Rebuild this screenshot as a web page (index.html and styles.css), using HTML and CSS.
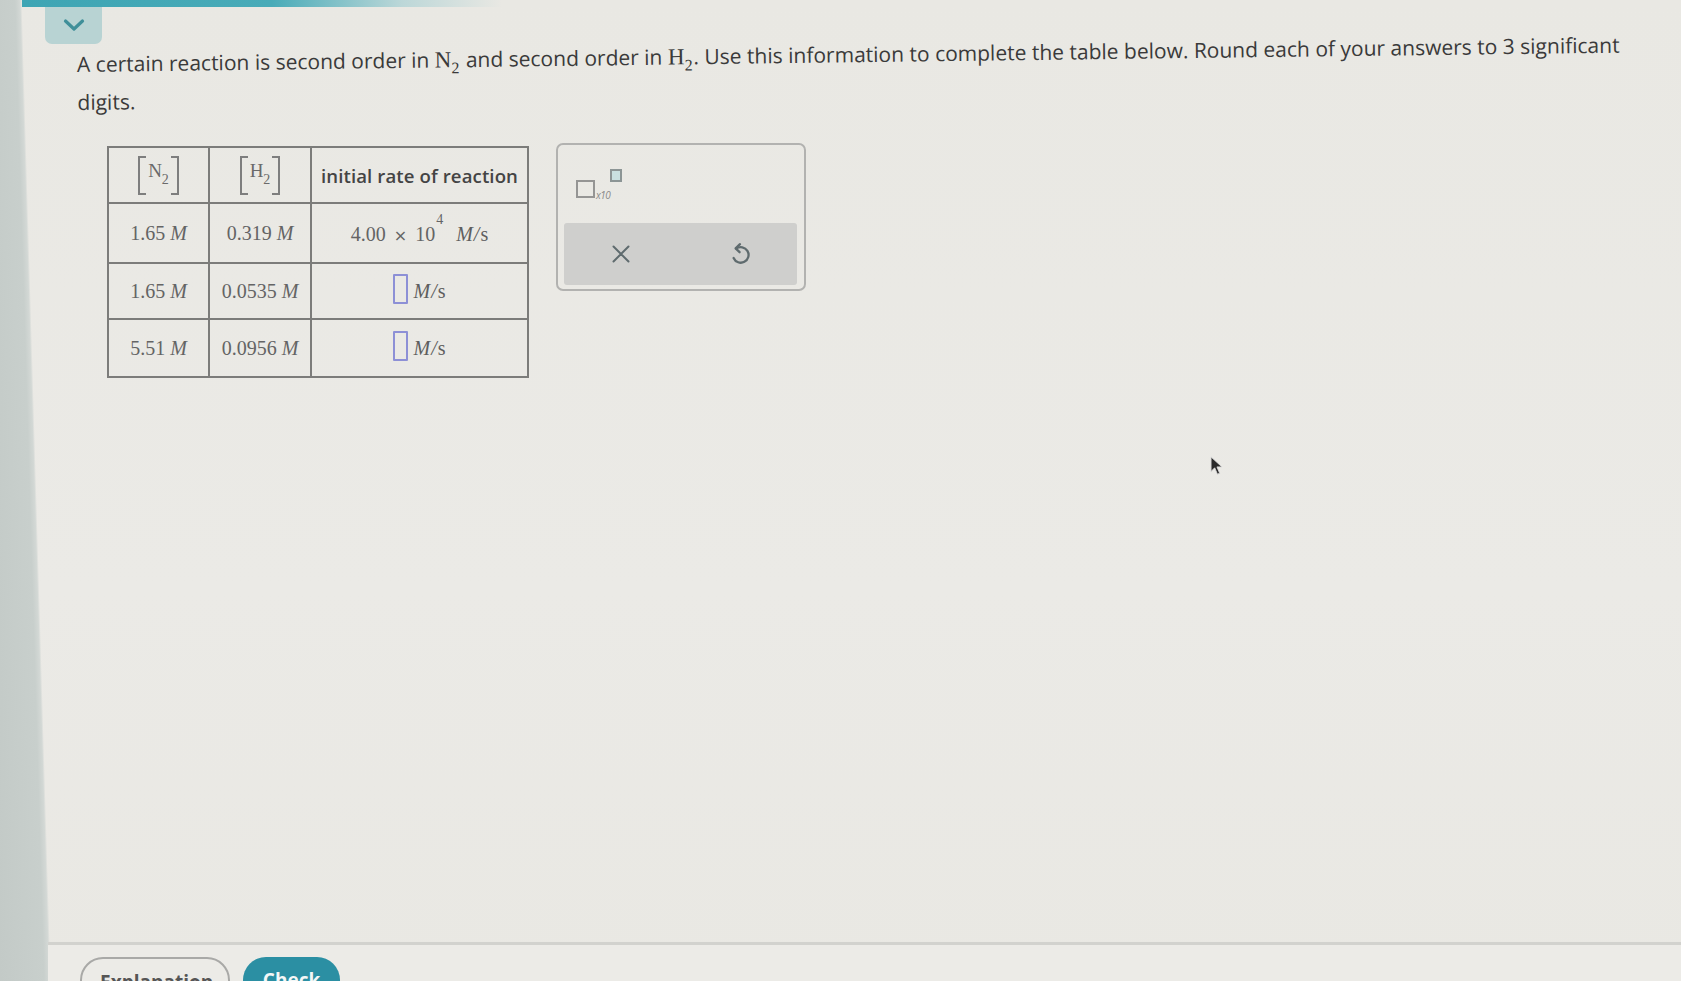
FILE: index.html
```html
<!DOCTYPE html>
<html lang="en">
<head>
<meta charset="utf-8">
<title>Rate law table</title>
<link rel="stylesheet" href="styles.css">
</head>
<body>
<div class="page">
  <div class="topband"></div>
  <div class="tab">
    <svg width="24" height="14" viewBox="0 0 24 14"><path d="M3.5 3 L12 11 L20.5 3" fill="none" stroke="#3f8f99" stroke-width="3.2" stroke-linecap="round" stroke-linejoin="round"/></svg>
  </div>
  <p class="q">A certain reaction is second order in <span class="chem">N<sub>2</sub></span> and second order in <span class="chem">H<sub>2</sub></span>. Use this information to complete the table below. Round each of your answers to 3 significant digits.</p>

  <div class="work">
    <table class="data">
      <tr class="hrow">
        <th class="c1"><span class="br l"></span><span class="chem-h">N<sub>2</sub></span><span class="br r"></span></th>
        <th class="c2"><span class="br l"></span><span class="chem-h">H<sub>2</sub></span><span class="br r"></span></th>
        <th class="c3 title">initial rate of reaction</th>
      </tr>
      <tr class="r1">
        <td>1.65 <i>M</i></td>
        <td>0.319 <i>M</i></td>
        <td>4.00 <span class="times">×</span> 10<sup>4</sup> <span class="unit"><i>M</i><i>/</i>s</span></td>
      </tr>
      <tr class="r2">
        <td>1.65 <i>M</i></td>
        <td>0.0535 <i>M</i></td>
        <td><span class="inbox"></span><span class="unit"><i>M</i><i>/</i>s</span></td>
      </tr>
      <tr class="r3">
        <td>5.51 <i>M</i></td>
        <td>0.0956 <i>M</i></td>
        <td><span class="inbox"></span><span class="unit"><i>M</i><i>/</i>s</span></td>
      </tr>
    </table>

    <div class="panel">
      <div class="sci">
        <span class="sbox"></span><span class="x10">x10</span><span class="sup"></span>
      </div>
      <div class="actions">
        <button class="act" aria-label="clear">
          <svg width="22" height="22" viewBox="0 0 22 22"><path d="M3.5 3.5 L18.5 18.5 M18.5 3.5 L3.5 18.5" stroke="#5f6b6e" stroke-width="2" stroke-linecap="round"/></svg>
        </button>
        <button class="act" aria-label="undo">
          <svg width="24" height="24" viewBox="0 0 24 24"><path d="M8.2 6.6 A7.8 7.8 0 1 1 5.6 16" fill="none" stroke="#5f6b6e" stroke-width="2.3" stroke-linecap="round"/><path d="M12 2.2 L7.6 6.4 L11.6 10.2" fill="none" stroke="#5f6b6e" stroke-width="2.3" stroke-linecap="round" stroke-linejoin="round"/></svg>
        </button>
      </div>
    </div>
  </div>

  <div class="spacer"></div>

  <div class="footer">
    <button class="btn explain">Explanation</button>
    <button class="btn check">Check</button>
  </div>

  <svg class="cursor" width="13" height="20" viewBox="0 0 14 22"><path d="M1 1 L1 17 L5 13 L8 20 L10.5 19 L7.5 12 L13 12 Z" fill="#2a2a2a" stroke="#d8d8d8" stroke-width="1"/></svg>
</div>
</body>
</html>
```

FILE: styles.css
```css
html, body {
  margin: 0;
  padding: 0;
}
body {
  width: 1681px;
  height: 981px;
  overflow: hidden;
  font-family: "Open Sans", "Liberation Sans", sans-serif;
}
.page {
  position: relative;
  width: 1681px;
  height: 981px;
  display: flex;
  flex-direction: column;
  background:
    linear-gradient(88.3deg, #c3cac7 0, #c8cfcc 44px, #d3d8d5 49px, rgba(0,0,0,0) 51px),
    linear-gradient(180deg, #e9e8e3 0%, #ebeae6 60%, #e9e8e3 100%);
  overflow: hidden;
}
.topband {
  margin-left: 22px;
  height: 7px;
  background: linear-gradient(90deg, #3ea5b4 0, #48abb8 250px, rgba(120,190,200,0.4) 380px, rgba(0,0,0,0) 480px);
  flex: none;
}
.tab {
  margin-left: 45px;
  width: 57px;
  height: 37px;
  background: #b8d3d3;
  border-radius: 0 0 7px 7px;
  display: flex;
  align-items: center;
  justify-content: center;
  flex: none;
}
.tab svg {
  margin-top: -2px;
}
.q {
  margin: 3px 0 0 0;
  padding-left: 77px;
  width: 1575px;
  font-size: 21px;
  line-height: 37.5px;
  color: #3a3a3a;
  transform-origin: 0 25%;
  transform: rotate(-0.72deg);
  flex: none;
}
.chem {
  font-family: "Liberation Serif", serif;
  font-size: 23px;
}
.chem sub {
  font-size: 16px;
  vertical-align: -6px;
  line-height: 0;
  margin-right: 1px;
}
.work {
  margin-top: 24px;
  margin-left: 107px;
  display: flex;
  align-items: flex-start;
  flex: none;
}
.data {
  border-collapse: collapse;
  font-family: "Liberation Serif", serif;
  font-size: 20px;
  color: #646464;
}
.data th, .data td {
  border: 2px solid #7c7c7a;
  text-align: center;
  padding: 0;
}
.data .c1 { width: 99px; }
.data .c2 { width: 100px; }
.data .c3 { width: 215px; }
.hrow { height: 56px; }
.r1 { height: 60px; }
.r2 { height: 56px; }
.r3 { height: 58px; }
.data td { vertical-align: middle; }
.title {
  font-family: "Open Sans", "Liberation Sans", sans-serif;
  font-weight: 600;
  font-size: 18.6px;
  color: #444;
  white-space: nowrap;
  letter-spacing: 0.1px;
}
.data th.c1, .data th.c2 {
  font-weight: normal;
  white-space: nowrap;
}
.br {
  display: inline-block;
  width: 8px;
  height: 39px;
  border: 2.5px solid #7e7e7e;
  vertical-align: middle;
  box-sizing: border-box;
}
.br.l { border-right: none; }
.br.r { border-left: none; }
.chem-h {
  display: inline-block;
  vertical-align: middle;
  font-size: 19px;
  color: #6a6a6a;
  margin: 0 2px;
  padding-bottom: 9px;
}
.chem-h sub {
  font-size: 14px;
  vertical-align: -7px;
  line-height: 0;
}
.times {
  font-family: "DejaVu Sans", sans-serif;
  font-size: 16px;
  margin: 0 3px;
}
.data sup {
  font-size: 14px;
  vertical-align: 17px;
  line-height: 0;
  margin-left: 1px;
  margin-right: 8px;
}
.unit {
  color: #5e5e5e;
}
.unit i + i {
  margin: 0 1px;
}
.inbox {
  display: inline-block;
  width: 15px;
  height: 30px;
  border: 2px solid #8d90d6;
  box-sizing: border-box;
  border-radius: 1px;
  vertical-align: middle;
  margin-right: 5px;
  margin-top: -4px;
}
.r2 td .unit, .r3 td .unit {
  vertical-align: middle;
}
.panel {
  margin-left: 27px;
  margin-top: -3px;
  width: 250px;
  height: 148px;
  box-sizing: border-box;
  border: 2px solid #b2b2b0;
  border-radius: 7px;
  display: flex;
  flex-direction: column;
}
.sci {
  height: 78px;
  display: flex;
  align-items: flex-start;
  padding-left: 18px;
  box-sizing: border-box;
  flex: none;
}
.sbox {
  margin-top: 35px;
  width: 19px;
  height: 18px;
  border: 2px solid #959594;
  box-sizing: border-box;
}
.x10 {
  margin-top: 43px;
  font-size: 10px;
  font-style: italic;
  color: #8a8a8a;
  letter-spacing: -0.5px;
  margin-left: 1px;
}
.sup {
  margin-top: 24px;
  width: 12px;
  height: 13px;
  border: 2px solid #8c9595;
  background: #c9e0e0;
  box-sizing: border-box;
}
.actions {
  margin: 0 7px 0 6px;
  height: 62px;
  background: #cfcfcd;
  border-radius: 3px;
  display: flex;
}
.act {
  flex: 1;
  border: none;
  background: transparent;
  display: flex;
  align-items: center;
  justify-content: center;
  padding: 0;
  margin: 0;
}
.act:first-child {
  padding-right: 6px;
}
.spacer {
  flex: 1;
}
.footer {
  margin-left: 48px;
  height: 24px;
  border-top: 3px solid #d2d2ce;
  background: #ecebe7;
  display: flex;
  align-items: flex-start;
  padding-left: 32px;
  padding-top: 12px;
  gap: 13px;
  flex: none;
  overflow: hidden;
}
.btn {
  height: 46px;
  border-radius: 23px;
  font-family: "Open Sans", "Liberation Sans", sans-serif;
  font-weight: 700;
  font-size: 19px;
  padding: 0 18px;
  line-height: 46px;
  flex: none;
  box-sizing: border-box;
}
.explain {
  width: 150px;
  background: transparent;
  border: 2px solid #a9a9a7;
  color: #555;
}
.check {
  width: 97px;
  background: #2b8fa3;
  border: none;
  color: #f4f7f7;
}
.cursor {
  position: absolute;
  left: 1210px;
  top: 456px;
  filter: blur(0.6px);
}
```
